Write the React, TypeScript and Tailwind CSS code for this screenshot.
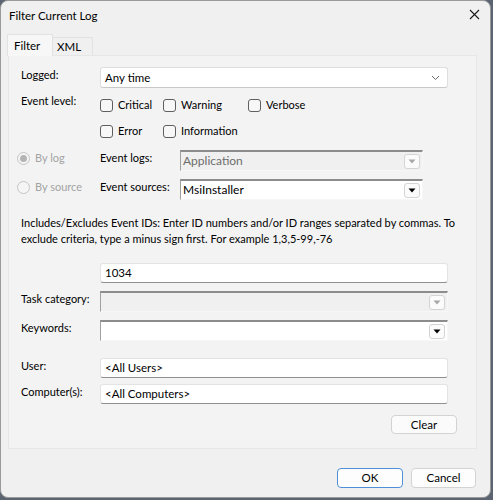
import React from 'react';

const font = { fontFamily: 'Lato, "Liberation Sans", sans-serif' };

function Checkbox({ label, w }: { label: string; w: string }) {
  return (
    <div className={`flex items-center gap-[5px] ${w}`}>
      <span className="size-[13px] shrink-0 rounded-[3px] border border-[#5f5f5f] bg-[#f7f7f7]" />
      <span>{label}</span>
    </div>
  );
}

function Radio({ label, checked }: { label: string; checked?: boolean }) {
  return (
    <div className="flex w-[91px] shrink-0 items-center gap-[5px] pl-[8px] text-[#a3a3a3]">
      <span className="grid size-[13px] place-items-center rounded-full border border-[#c5c5c5] bg-[#f5f5f5]">
        {checked && <span className="size-[7px] rounded-full bg-[#b4b4b4]" />}
      </span>
      <span className="whitespace-nowrap">{label}</span>
    </div>
  );
}

function Combo({ value, disabled, w = 'w-[243px]' }: { value?: string; disabled?: boolean; w?: string }) {
  return (
    <div
      className={`flex h-[21px] shrink-0 items-center border-t-2 border-l border-r border-b border-t-[#8c8c8c] border-l-[#a0a0a0] border-r-[#f7f7f7] border-b-[#f7f7f7] ${w} ${
        disabled ? 'bg-[#f0f0f0] text-[#6d6d6d]' : 'bg-white'
      }`}
    >
      <span className="flex-1 truncate pl-[2px] text-[12px]">{value}</span>
      <span className="mr-[2px] grid h-[15px] w-[16px] place-items-center rounded-[3px] border border-[#d4d4d4] bg-[#fbfbfb]">
        <svg width="8" height="5" viewBox="0 0 8 5">
          <path d="M0.5 0.5 L7.5 0.5 L4 4.5 Z" fill={disabled ? '#a8a8a8' : '#000'} />
        </svg>
      </span>
    </div>
  );
}

function TextBox({ value }: { value: string }) {
  return (
    <div className="flex h-[20px] w-[348px] shrink-0 items-center rounded-[3px] border border-[#e3e3e3] border-b-[#8f8f8f] bg-white pl-[4px] text-[11.5px]">
      {value}
    </div>
  );
}

function Label({ children }: { children: React.ReactNode }) {
  return <div className="w-[79px] shrink-0 whitespace-nowrap leading-[16px]">{children}</div>;
}

export default function App() {
  return (
    <div className="h-[500px] w-[493px] bg-[#5b6470] text-[11px] text-black" style={font}>
      <div className="flex h-[498px] w-[491px] flex-col rounded-[8px] border border-[#9a9a9a] bg-[#f0f0f0]">
        {/* title bar */}
        <div className="flex h-[30px] items-center justify-between pl-[8px] pr-[8px]">
          <span className="-mt-[1px] text-[11.5px]">Filter Current Log</span>
          <svg width="11" height="11" viewBox="0 0 11 11" className="-mt-[4px] mr-[2px]">
            <path d="M1 1 L10 10 M10 1 L1 10" stroke="#1a1a1a" strokeWidth="1.1" />
          </svg>
        </div>

        {/* tabs */}
        <div className="mt-[3px] flex h-[21px] items-end pl-[6px] text-[11.5px]">
          <div className="relative z-10 -mb-[1px] flex h-[22px] w-[46px] items-center border border-b-0 border-[#e2e2e2] bg-[#f7f7f7] pl-[6px]">
            Filter
          </div>
          <div className="flex h-[18px] w-[40px] items-center border border-l-0 border-b-0 border-[#e2e2e2] bg-[#f0f0f0] pl-[4px]">
            XML
          </div>
        </div>

        {/* panel */}
        <div className="ml-[7px] flex h-[394px] w-[469px] flex-col border border-[#e6e6e6] bg-[#f3f3f3] pl-[12px]">
          <div className="mt-[11px] flex items-start">
            <Label>Logged:</Label>
            <div className="flex h-[21px] w-[348px] items-center justify-between rounded-[3px] border border-[#dedede] border-b-[#c8c8c8] bg-white pl-[4px] pr-[7px] text-[11.5px]">
              <span>Any time</span>
              <svg width="9" height="6" viewBox="0 0 9 6">
                <path d="M1 1 L4.5 4.5 L8 1" fill="none" stroke="#6a6a6a" strokeWidth="1" />
              </svg>
            </div>
          </div>

          <div className="mt-[5px] flex items-start">
            <Label>Event level:</Label>
            <div className="mt-[2px] flex h-[20px] items-center">
              <Checkbox label="Critical" w="w-[63px]" />
              <Checkbox label="Warning" w="w-[85px]" />
              <Checkbox label="Verbose" w="w-[80px]" />
            </div>
          </div>
          <div className="mt-[6px] flex h-[20px] items-center pl-[79px]">
            <Checkbox label="Error" w="w-[63px]" />
            <Checkbox label="Information" w="w-[90px]" />
          </div>

          <div className="-ml-[12px] mt-[9px] flex items-start">
            <div className="leading-[16px]">
              <Radio label="By log" checked />
            </div>
            <div className="w-[80px] shrink-0 whitespace-nowrap leading-[16px]">Event logs:</div>
            <Combo value="Application" disabled />
          </div>
          <div className="-ml-[12px] mt-[8px] flex items-start">
            <div className="leading-[16px]">
              <Radio label="By source" />
            </div>
            <div className="w-[80px] shrink-0 whitespace-nowrap leading-[16px]">Event sources:</div>
            <Combo value="MsiInstaller" />
          </div>

          <p className="mt-[15px] whitespace-nowrap leading-[16px]">
            Includes/Excludes Event IDs: Enter ID numbers and/or ID ranges separated by commas. To
            <br />
            exclude criteria, type a minus sign first. For example 1,3,5-99,-76
          </p>

          <div className="mt-[16px] pl-[79px]">
            <TextBox value="1034" />
          </div>

          <div className="mt-[8px] flex items-start">
            <Label>Task category:</Label>
            <Combo disabled w="w-[348px]" />
          </div>
          <div className="mt-[8px] flex items-start">
            <Label>Keywords:</Label>
            <Combo w="w-[348px]" />
          </div>

          <div className="mt-[17px] flex items-start">
            <Label>User:</Label>
            <TextBox value="<All Users>" />
          </div>
          <div className="mt-[6px] flex items-start">
            <Label>Computer(s):</Label>
            <TextBox value="<All Computers>" />
          </div>

          <div className="mt-[11px] flex justify-end pr-[19px]">
            <button className="h-[19px] w-[66px] rounded-[4px] border border-[#d3d3d3] bg-[#fbfbfb] text-[11.5px] leading-[16px]">
              Clear
            </button>
          </div>
        </div>

        {/* footer */}
        <div className="mt-[19px] flex justify-end gap-[8px] pr-[14px] text-[11.5px]">
          <button className="h-[20px] w-[66px] rounded-[4px] border border-[#4f8fd8] bg-[#fdfdfd] leading-[16px]">
            OK
          </button>
          <button className="h-[20px] w-[65px] rounded-[4px] border border-[#d3d3d3] bg-[#fdfdfd] leading-[16px]">
            Cancel
          </button>
        </div>
      </div>
    </div>
  );
}
